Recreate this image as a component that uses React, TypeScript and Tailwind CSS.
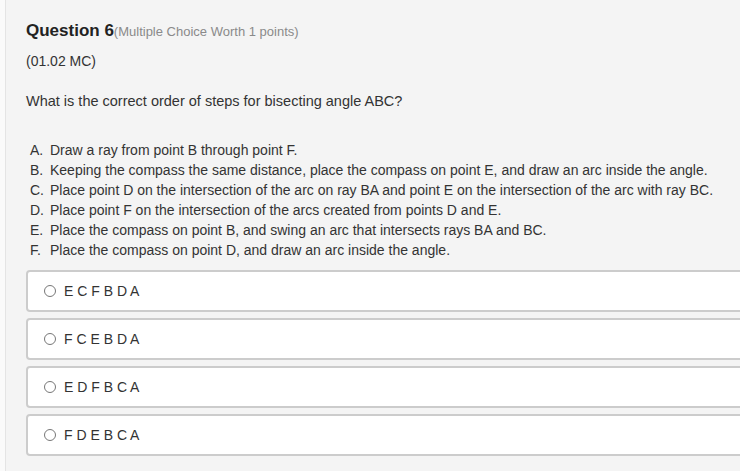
const steps = [
  "Draw a ray from point B through point F.",
  "Keeping the compass the same distance, place the compass on point E, and draw an arc inside the angle.",
  "Place point D on the intersection of the arc on ray BA and point E on the intersection of the arc with ray BC.",
  "Place point F on the intersection of the arcs created from points D and E.",
  "Place the compass on point B, and swing an arc that intersects rays BA and BC.",
  "Place the compass on point D, and draw an arc inside the angle.",
];

const letters = ["A.", "B.", "C.", "D.", "E.", "F."];

const choices = ["E C F B D A", "F C E B D A", "E D F B C A", "F D E B C A"];

export default function App() {
  return (
    <div
      className="w-[740px] h-[471px] overflow-hidden bg-[#fafafa] pl-[5px] text-[#333]"
      style={{ fontFamily: '"Liberation Sans", Arial, sans-serif' }}
    >
      <div className="h-full bg-[#f4f4f4] border-l border-[#e4e4e4] pl-5 pt-[21px]">
        <h2 className="flex items-baseline leading-[20px]">
          <span className="text-[17px] font-bold text-[#222]">Question 6</span>
          <span className="text-[13px] text-[#8a8a8a]">(Multiple Choice Worth 1 points)</span>
        </h2>
        <p className="mt-[10px] text-[14px] leading-[18px]">(01.02 MC)</p>
        <p className="mt-[22px] text-[14.5px] leading-[18px]">
          What is the correct order of steps for bisecting angle ABC?
        </p>
        <ol className="mt-[30px] text-[14px] leading-[20px]">
          {steps.map((s, i) => (
            <li key={s} className="flex pl-[4px]">
              <span className="w-[20px] shrink-0">{letters[i]}</span>
              <span>{s}</span>
            </li>
          ))}
        </ol>
        <div className="mt-[10px] -mr-4 flex flex-col gap-[6px]">
          {choices.map((c) => (
            <label
              key={c}
              className="flex h-[42px] items-center gap-[8px] rounded-[4px] border-2 border-[#cccccc] bg-white pl-[16px]"
            >
              <span className="h-[12px] w-[12px] rounded-full border border-[#777] bg-white" />
              <span className="text-[14px] text-[#333]">{c}</span>
            </label>
          ))}
        </div>
      </div>
    </div>
  );
}
